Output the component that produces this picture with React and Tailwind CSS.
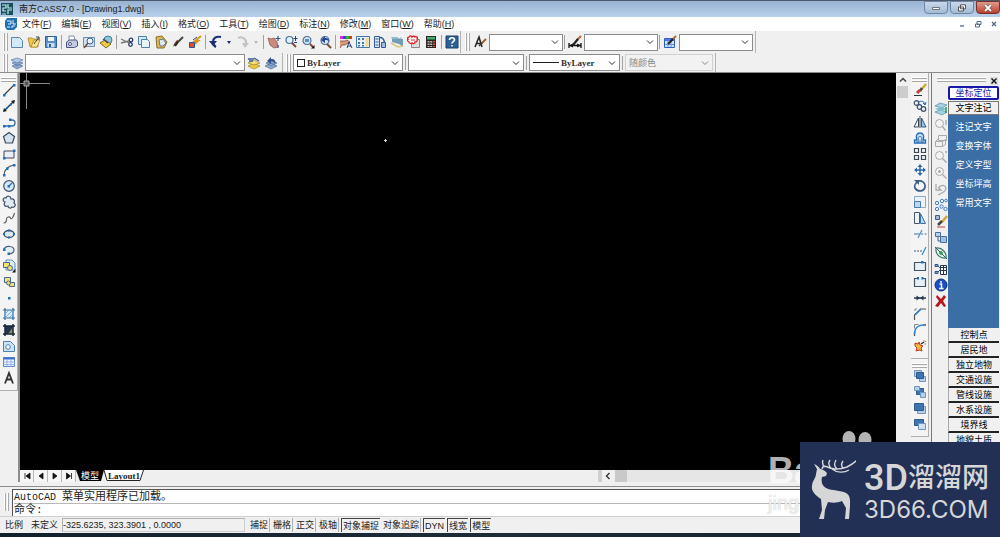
import React, { useState } from 'react';

const ICONS = {
    // standard
    new: <path d="M1.5 2.5h8l3 3v7h-11z" fill="#d3e9f7" stroke="#5b87a8" />,
    open: (
        <>
            <path d="M1 3h4l1 1h5v8H3z" fill="#f0c64a" stroke="#a8842a" strokeWidth=".8" />
            <path d="M4 12l3-7h6l-3 7z" fill="#ffe38a" stroke="#a8842a" strokeWidth=".8" />
            <path d="M7 9l5-7M9 2h3v3" fill="none" stroke="#444" />
        </>
    ),
    save: (
        <>
            <path d="M1.5 1.5h11v11h-11z" fill="#5b8fc9" stroke="#2f5f98" />
            <path d="M4 2h6v4H4z" fill="#eef5fb" />
            <path d="M3.500 8h7v4.500h-7z" fill="#c6dcf0" />
            <path d="M5 9h2v3H5z" fill="#2f5f98" />
        </>
    ),
    print: (
        <>
            <path d="M4 1h5l1 5H4z" fill="#fff" stroke="#6b7896" strokeWidth=".8" />
            <path d="M1.500 7l3-2h7l1 2v4l-3 1.500h-8z" fill="#c4cbe0" stroke="#4b5980" />
            <circle cx="5" cy="9" r="1.500" fill="#fff" stroke="#4b5980" />
        </>
    ),
    preview: (
        <>
            <path d="M1.500 2.500h11v9h-11z" fill="#cfe2f3" stroke="#6a8fb5" />
            <circle cx="8" cy="6" r="3" fill="#eef7ff" stroke="#3f5f85" />
            <path d="M6 8l-4 5" stroke="#7a4a35" strokeWidth="1.600" />
        </>
    ),
    publish: (
        <>
            <circle cx="9" cy="5" r="4" fill="#8fc4dd" stroke="#3c7d9d" />
            <path d="M1 8l5-3 6 4-5 4z" fill="#f2c943" stroke="#7f6724" />
            <path d="M4 4l5 4" stroke="#3a4a70" strokeWidth="1.500" />
        </>
    ),
    cut: (
        <>
            <path d="M1 4l8 4M1 8l8-2" stroke="#777" strokeWidth="1.300" />
            <circle cx="11" cy="5" r="1.800" fill="none" stroke="#2b3c66" strokeWidth="1.300" />
            <circle cx="10.500" cy="9.500" r="1.800" fill="none" stroke="#2b3c66" strokeWidth="1.300" />
        </>
    ),
    copy: (
        <>
            <path d="M1.500 1.500h8v8h-8z" fill="#d4e8f6" stroke="#4d80a8" />
            <path d="M4.500 4.500h6l2 2v6h-8z" fill="#e6f3fb" stroke="#4d80a8" />
        </>
    ),
    paste: (
        <>
            <path d="M2 2l6-1 5 6-3 6H3z" fill="#e1b952" stroke="#8a6c23" />
            <path d="M5 5l4-1 3 4-3 3H6z" fill="#dceaf5" stroke="#5a7a99" />
        </>
    ),
    match: (
        <>
            <path d="M12 2L7 7" stroke="#444" strokeWidth="2" />
            <path d="M8 6L2 12l1-3 3-4z" fill="#6b3d1c" />
            <path d="M7 7l-3 4" stroke="#222" strokeWidth="2" />
        </>
    ),
    block: (
        <>
            <path d="M13 1L7 6h3L5 10" fill="none" stroke="#d39a1c" strokeWidth="2" />
            <path d="M1.500 7.500h5v5h-5z" fill="#d65132" stroke="#31508e" />
            <path d="M9 2l-4 3" stroke="#31508e" />
        </>
    ),
    undo: (
        <>
            <path d="M12 2C7 1 4 3 4 7c0 2 1 4 3 5" fill="none" stroke="#1b2f78" strokeWidth="2.200" />
            <path d="M0 6h8l-4 5z" fill="#1b2f78" />
        </>
    ),
    redo: (
        <>
            <path d="M2 3c4-2 9 1 8 6" fill="none" stroke="#c3c3c3" strokeWidth="2" />
            <path d="M6 8h7l-4 5z" fill="#c3c3c3" />
        </>
    ),
    pan: (
        <>
            <path d="M1 3l3 1 3-1 3 4 1 5-4 1-4-3z" fill="#c98a80" stroke="#8f5a55" strokeWidth=".8" />
            <path d="M11 1v5M8.500 3.500h5M11 10v3" stroke="#36578c" strokeWidth="1.200" />
        </>
    ),
    zoomRt: (
        <>
            <circle cx="5.500" cy="5" r="3.500" fill="#dff0fa" stroke="#4d6c96" strokeWidth="1.200" />
            <path d="M8 8l4 4" stroke="#7c4a35" strokeWidth="2" />
            <path d="M11.500 1v5M9.500 3.500h4M10 7.500h3" stroke="#27457d" />
        </>
    ),
    zoomWin: (
        <>
            <circle cx="6" cy="5.500" r="4" fill="#cfe6f5" stroke="#4d6c96" strokeWidth="1.200" />
            <path d="M4 4h4v3H4z" fill="#5a90c0" />
            <path d="M9 9l3 3" stroke="#7c4a35" strokeWidth="2" />
            <path d="M13.500 10v3.500H10z" fill="#111" />
        </>
    ),
    zoomPrev: (
        <>
            <circle cx="7" cy="5.500" r="4" fill="#cfe6f5" stroke="#4d6c96" strokeWidth="1.200" />
            <path d="M3 5l4-4v2c3 0 4 1 4 4-1-2-2-2-4-2v3z" fill="#25458c" />
            <path d="M9 9l4 4" stroke="#7c4a35" strokeWidth="2" />
        </>
    ),
    props: (
        <>
            <path d="M1 1h3v3H1z" fill="#e52fd0" />
            <path d="M4 1h3v3H4z" fill="#2d47e0" />
            <path d="M7 1h3v3H7z" fill="#25b83a" />
            <path d="M10 1h3v3h-3z" fill="#e53022" />
            <path d="M1 6h5l2-1 3 2-2 1-3 2H3l-2 3" fill="#d99a7a" stroke="#7c4b3c" strokeWidth=".8" />
            <path d="M8 13l2-6 3 6M9 11h3" fill="none" stroke="#2a3f78" />
        </>
    ),
    center: (
        <>
            <path d="M.500 1.500h13v11H.500z" fill="#e4eff9" stroke="#4576ad" />
            <path d="M2 3h2v2H2zM6 3h2v2H6zM2 7h2v2H2zM6 7h2v2H6zM2 10h2v1.500H2zM6 10h2v1.500H6z" fill="#4576ad" />
            <path d="M9.500 3h3v8.500h-3z" fill="#f0dc88" />
        </>
    ),
    palettes: (
        <>
            <path d="M1.500 1.500h5v11h-5z" fill="#dcebf8" stroke="#2f5b9a" />
            <path d="M2.500 4h3M2.500 7h3M2.500 10h3" stroke="#2f5b9a" />
            <path d="M7 2.500c3 0 4 2 4.500 5" fill="none" stroke="#2f5b9a" strokeWidth="1.500" />
            <path d="M8.500 7.500h4v5h-4z" fill="#9dbfe2" stroke="#2f5b9a" />
        </>
    ),
    sheets: (
        <>
            <path d="M1 2h11l-2 4H3z" fill="#93b9cc" />
            <path d="M2 4h11v8L9 9 2 7z" fill="#6e9db5" />
            <path d="M1 8l7 4 5-1" fill="none" stroke="#d8c57c" strokeWidth="1.500" />
            <path d="M8 3l5-2" stroke="#fff" />
        </>
    ),
    markup: (
        <>
            <path d="M4.500 4.500h8v8h-8z" fill="#ddd" stroke="#888" />
            <path d="M2 2c1-2 3-1 3 0 1-1 3-1 3 0 2-1 3 1 2 2 1 2-1 3-2 3 0 2-2 2-3 1-1 1-3 0-3-1-2-1-2-3-1-3-1-1 0-2 1-2z" fill="#fff" stroke="#dd2222" strokeWidth="1.300" />
            <path d="M4 5h4" stroke="#dd2222" />
        </>
    ),
    calc: (
        <>
            <path d="M2 1h10v12H2z" fill="#2c2522" />
            <path d="M3 2h8v2.500H3z" fill="#3fae75" />
            <path d="M3.500 6h2v1.500h-2zM6.200 6h2v1.500h-2zM3.500 8.500h2V10h-2zM6.200 8.500h2V10h-2zM3.500 11h2v1h-2zM6.200 11h2v1h-2z" fill="#bbb" />
            <path d="M9 6h2v1.500H9zM9 8.500h2V10H9zM9 11h2v1H9z" fill="#d24a3a" />
        </>
    ),
    help: (
        <>
            <path d="M1 1h12v12H1z" fill="#2c6095" stroke="#17406e" />
            <path d="M4.500 5c0-3 5-3 5 0 0 1.500-2.500 1.500-2.500 3.500M7 10v1.500" fill="none" stroke="#fff" strokeWidth="1.600" />
        </>
    ),
    textStyle: (
        <>
            <path d="M2 12L6 2l3 10M3.500 8.500h4" fill="none" stroke="#222" strokeWidth="1.500" />
            <path d="M13 4l-5 5" stroke="#a0602c" strokeWidth="2" />
            <path d="M9 8l-3 3" stroke="#333" strokeWidth="1.600" />
        </>
    ),
    dimStyle: (
        <>
            <path d="M1 8v5M13 8v5M1 10.500h12" stroke="#111" strokeWidth="1.300" />
            <path d="M1 10.500l4-2v4zM13 10.500l-4-2v4z" fill="#111" />
            <path d="M13 1L9 5" stroke="#b4682e" strokeWidth="2" />
            <path d="M10 4L5 10" stroke="#222" strokeWidth="2.200" />
        </>
    ),
    tableStyle: (
        <>
            <path d="M1.500 3.500h10v9h-10z" fill="#cfe0f8" stroke="#2f5fc0" />
            <path d="M2 4h9v2H2z" fill="#4c7fe0" />
            <path d="M2 9.500h9M5 6v6M8 6v6" stroke="#6b93dd" />
            <path d="M13 1L9 5" stroke="#b4682e" strokeWidth="2" />
            <path d="M10 4L5 9" stroke="#222" strokeWidth="2" />
        </>
    ),
    layers: (
        <>
            <path d="M2 10l6-2 5 2-6 3zM2 7l6-2 5 2-6 3z" fill="#8fa9cc" stroke="#5d7ba8" strokeWidth=".7" />
            <path d="M1 4l6-2 6 2-6 3z" fill="#b3cbe4" stroke="#5d7ba8" strokeWidth=".7" />
        </>
    ),
    layerCurrent: (
        <>
            <path d="M1 10l6-3 6 3-6 3z" fill="#ecca3c" stroke="#9b8222" strokeWidth=".7" />
            <path d="M1 7l6-3 6 3-6 2z" fill="#f4e07a" stroke="#9b8222" strokeWidth=".7" />
            <path d="M1 3h6M2 5h4M7 2l5 3" stroke="#3c5c94" strokeWidth="1.300" />
        </>
    ),
    layerPrev: (
        <>
            <path d="M1 10l6-3 6 3-6 3zM2 7l5-2 6 2-6 3z" fill="#8fa9cc" stroke="#4f6d9a" strokeWidth=".7" />
            <path d="M3 5l4-4v2c4 0 5 2 4 5-1-2-2-3-4-3v3z" fill="#35528e" />
        </>
    ),
    // draw
    line: (
        <>
            <path d="M2 12L12 2" stroke="#444" strokeWidth="1.200" />
            <path d="M1 11h2.500v2.500H1zM11 1h2.500v2.500H11z" fill="#1d6fc4" />
        </>
    ),
    xline: (
        <>
            <path d="M2 12L12 2" stroke="#333" strokeWidth="1.500" />
            <path d="M1 13l1-4 3 3zM13 1l-4 1 3 3z" fill="#222" />
            <path d="M4 8h2v2H4zM8 4.500h2v2H8z" fill="#1d6fc4" />
        </>
    ),
    pline: (
        <>
            <path d="M2 11h8c4 0 4-6 0-6H8" fill="none" stroke="#3c6fa4" strokeWidth="1.300" />
            <path d="M1 10h2.500v2.500H1zM6 10h2.500v2.500H6zM7 3.500h2.500V6H7z" fill="#1d6fc4" />
        </>
    ),
    polygon: <path d="M7 1.500l5.500 4-2 6.500h-7l-2-6.500z" fill="#d3e2ee" stroke="#3a4a5c" strokeWidth="1.200" />,
    rect: (
        <>
            <path d="M2 4h10v7H2z" fill="#e7f0f8" stroke="#445" />
            <path d="M1 10h2.500v2.500H1zM11 2.500h2.500V5H11z" fill="#1d6fc4" />
        </>
    ),
    arc: (
        <>
            <path d="M2 12c0-5 4-9 10-10" fill="none" stroke="#555" strokeWidth="1.200" />
            <path d="M1 11h2.500v2.500H1zM4 4.500h2.500V7H4zM11 1h2.500v2.500H11z" fill="#1d6fc4" />
        </>
    ),
    circle: (
        <>
            <circle cx="7" cy="7" r="5.300" fill="#dbe9f5" stroke="#3a5573" strokeWidth="1.200" />
            <path d="M7 7l3-3" stroke="#1d6fc4" strokeWidth="1.200" />
            <path d="M5.500 6H8v2.500H5.500z" fill="#1d6fc4" />
        </>
    ),
    cloud: <path d="M3 7C0 6 1 2 4 3c1-3 5-2 5 1 3-1 4 2 3 4 3 2 0 5-2 4-1 2-4 1-4-1-3 1-5-1-3-4z" fill="#dfeaf3" stroke="#3f5268" strokeWidth="1.200" />,
    spline: <path d="M1.500 12c3 0 3-2 3-4s3-3 4-1 3-1 4-5" fill="none" stroke="#666" strokeWidth="1.200" />,
    ellipse: (
        <>
            <ellipse cx="7" cy="7" rx="5" ry="3.500" fill="#dce9f4" stroke="#3a4a5c" strokeWidth="1.300" />
            <path d="M1 6h2v2H1zM6 2.500h2v2H6zM11 6h2v2h-2zM6 9.500h2v2H6z" fill="#1d6fc4" />
        </>
    ),
    ellipseArc: (
        <>
            <path d="M2 6c2-4 10-3 10 1 0 2-2 4-5 4" fill="#e4eef6" stroke="#4a5e78" strokeWidth="1.200" />
            <path d="M1 5.500h2.500V8H1zM5.500 9.500H8V12H5.500z" fill="#1d6fc4" />
        </>
    ),
    insert: (
        <>
            <path d="M4 1h6l3 3v7H4z" fill="#dcecf8" stroke="#5a8fbe" />
            <path d="M1.500 3.500h6v5h-6z" fill="#f3e36a" stroke="#44699a" />
            <circle cx="8" cy="9" r="2.500" fill="#f3e36a" stroke="#44699a" />
            <path d="M13.500 10v3.500H10z" fill="#111" />
        </>
    ),
    makeBlock: (
        <>
            <path d="M2.500 2.500h6v5h-6z" fill="#f3e36a" stroke="#44699a" />
            <path d="M7.500 7.500h5v4h-5z" fill="#f3e36a" stroke="#44699a" />
            <circle cx="6.500" cy="8" r="2" fill="#f3e36a" stroke="#44699a" />
        </>
    ),
    point: <path d="M6 6h2.500v2.500H6z" fill="#1d6fc4" />,
    hatch: (
        <>
            <path d="M3 3h8v8H3z" fill="#d9ebf8" />
            <path d="M1 3h12M1 11h12M3 1v12M11 1v12" stroke="#2d6ca6" strokeWidth="1.200" />
            <path d="M3 7l4-4M3 11l8-8M7 11l4-4" stroke="#6fa5d0" strokeWidth=".8" />
        </>
    ),
    gradient: (
        <>
            <path d="M3 3h8v8H3z" fill="#26334f" />
            <path d="M6 11l5-7v7z" fill="#8c9455" />
            <path d="M1 3h12M1 11h12M3 1v12M11 1v12" stroke="#16283c" strokeWidth="1.500" />
        </>
    ),
    region: (
        <>
            <path d="M1.500 2.500h7l4 4v6h-11z" fill="#cfe3f4" stroke="#4a80b4" />
            <circle cx="6" cy="8" r="2.300" fill="#fff" stroke="#4a80b4" />
        </>
    ),
    table: (
        <>
            <path d="M1.500 2.500h11v9h-11z" fill="#eef4fd" stroke="#5b83cf" />
            <path d="M1.500 2.500h11v2h-11z" fill="#3d6fd0" />
            <path d="M1 7h12M1 9.500h12M5 4v8M9 4v8" stroke="#86a8e0" strokeWidth=".8" />
        </>
    ),
    mtext: <path d="M3 12.500L7 2l4 10.500M4 8.500h6" fill="none" stroke="#333" strokeWidth="1.800" />,
    // modify
    erase: (
        <>
            <path d="M13 1L8 7" stroke="#d9a33a" strokeWidth="2.500" />
            <path d="M9 5L7 8" stroke="#4a4a4a" strokeWidth="2.500" />
            <path d="M7 7l-3 3" stroke="#c5443a" strokeWidth="3" />
            <path d="M1 12.500h8" stroke="#333" />
        </>
    ),
    copyObj: (
        <>
            <circle cx="3.500" cy="4" r="2.300" fill="#e3edf6" stroke="#38506c" strokeWidth="1.200" />
            <path d="M6 3c3-2 6 0 6 3M10 4l2 2 1-3" fill="none" stroke="#1d6fc4" />
            <circle cx="6.500" cy="8" r="2.300" fill="#e3edf6" stroke="#38506c" strokeWidth="1.200" />
            <circle cx="10.500" cy="10" r="2.300" fill="#e3edf6" stroke="#38506c" strokeWidth="1.200" />
        </>
    ),
    mirror: (
        <>
            <path d="M5.500 3v9H1z" fill="#eef4f9" stroke="#3a4a5c" />
            <path d="M8.500 3v9H13z" fill="#9cc4e4" stroke="#2c5c8c" />
            <path d="M7 1v12" stroke="#3a4a5c" />
        </>
    ),
    offset: (
        <>
            <path d="M1.500 12V9H4C2 5 4 2 7 2s5 3 3 7h2.500v3z" fill="#c8e0f4" stroke="#1f6fb8" strokeWidth="1.300" />
            <path d="M3 11h3c0-2-1-3-1-4 0-2 4-2 4 0 0 1-1 2-1 4h3" fill="none" stroke="#3f6f9e" />
        </>
    ),
    array: <path d="M1.500 1.500h4v4h-4zM8.500 1.500h4v4h-4zM1.500 8.500h4v4h-4zM8.500 8.500h4v4h-4z" fill="#eef1f4" stroke="#3c4754" strokeWidth="1.200" />,
    move: (
        <>
            <path d="M7 2v10M2 7h10" stroke="#2f68a8" strokeWidth="1.500" />
            <path d="M7 1l2.500 3h-5zM7 13l2.500-3h-5zM1 7l3-2.500v5zM13 7l-3-2.500v5z" fill="#2f68a8" />
        </>
    ),
    rotate: (
        <>
            <path d="M4 3c4-3 9 1 8 5-1 5-8 5-10 1-1-2 0-4 2-6" fill="none" stroke="#3c5f8a" strokeWidth="1.700" />
            <path d="M1 1h5v5z" fill="#3c5f8a" />
        </>
    ),
    scale: (
        <>
            <path d="M1.500 1.500h11v11h-11z" fill="#eaf3fa" stroke="#8aa9c6" />
            <path d="M1.500 6.500h6v6h-6z" fill="#bcd8ee" stroke="#4b7cac" />
        </>
    ),
    stretch: (
        <>
            <path d="M1.500 1.500h5v11h-5z" fill="#eef3f8" stroke="#47586c" />
            <path d="M7.500 2.500l5 10h-5z" fill="#b9d6ee" stroke="#3f74aa" />
        </>
    ),
    trim: (
        <>
            <path d="M1 7h6M8 7h2M11.500 7h2" stroke="#3f74aa" strokeWidth="1.200" />
            <path d="M5 11l4-8" stroke="#5294d0" strokeWidth="1.200" />
        </>
    ),
    extend: (
        <>
            <path d="M1 8h2M4 8h2M7 8h2" stroke="#4b5f78" strokeWidth="1.200" />
            <path d="M9 12l4-8" stroke="#3f8ad0" strokeWidth="1.300" />
        </>
    ),
    breakPt: (
        <>
            <path d="M1.500 3.500h11v8h-11z" fill="#e5eff8" stroke="#445468" strokeWidth="1.200" />
            <path d="M8 2h2.500v2.500H8z" fill="#1d6fc4" />
        </>
    ),
    breakObj: (
        <>
            <path d="M5 3.500H1.500v8h11v-8H9" fill="#e5eff8" stroke="#445468" strokeWidth="1.200" />
            <path d="M4 2h2v2.500H4zM8.500 2h2v2.500h-2z" fill="#1d6fc4" />
        </>
    ),
    join: (
        <>
            <path d="M1 7h12" stroke="#24364c" strokeWidth="1.500" />
            <path d="M7 7L3.500 4.500v5zM7 7l3.500-2.500v5z" fill="#24364c" />
        </>
    ),
    chamfer: (
        <>
            <path d="M1.500 13V8l6-6H13" fill="none" stroke="#555" strokeWidth="1.200" />
            <path d="M2 8l6-6" stroke="#2f86d4" strokeWidth="1.600" />
            <path d="M2 2h2M2 2v2" stroke="#888" />
        </>
    ),
    fillet: (
        <>
            <path d="M1.500 13v-3M10 2h3" stroke="#555" strokeWidth="1.300" />
            <path d="M1.500 11c0-6 4-9 9-9" fill="none" stroke="#2f86d4" strokeWidth="1.600" />
            <path d="M1.500 1.500h4M1.500 1.500v4" stroke="#888" />
        </>
    ),
    explode: (
        <>
            <path d="M2 4l3 1 1-2 1 3 3 1-2 2 1 3-3-1-3 1 1-3-2-2z" fill="#f0b93c" stroke="#c23a22" />
            <path d="M8 5l3-2" stroke="#333" strokeWidth="1.500" />
            <path d="M11 1v1.500M13 2l-1 1M13 5h-1.500" stroke="#c97b3c" />
        </>
    ),
    front: (
        <>
            <path d="M1.500 1.500h7v6h-7z" fill="#b5d0e8" stroke="#6f97bd" />
            <path d="M6.500 7.500h6v5h-6z" fill="#b5d0e8" stroke="#6f97bd" />
            <path d="M3.500 3.500h7v6h-7z" fill="#3f75ae" stroke="#2c5c90" />
        </>
    ),
    back: (
        <>
            <path d="M3.500 3.500h7v6h-7z" fill="#3f75ae" stroke="#2c5c90" />
            <path d="M1.500 1.500h5v4h-5z" fill="#b5d0e8" stroke="#6f97bd" />
            <path d="M7.500 7.500h5v5h-5z" fill="#b5d0e8" stroke="#6f97bd" />
        </>
    ),
    above: (
        <>
            <path d="M4.500 5.500h8v7h-8z" fill="#b5d0e8" stroke="#6f97bd" />
            <path d="M1.500 2.500h9v7h-9z" fill="#3f75ae" stroke="#2c5c90" />
        </>
    ),
    under: (
        <>
            <path d="M1.500 2.500h9v6h-9z" fill="#3f75ae" stroke="#2c5c90" />
            <path d="M5.500 6.500h7v6h-7z" fill="#cfe2f2" stroke="#6f97bd" />
        </>
    ),
    // CASS side tools
    layerGreen: (
        <>
            <path d="M1 10l5-2 7 2-5 3zM1 4l5-3 7 2-5 3z" fill="#a9d2e0" stroke="#5f98ad" strokeWidth=".8" />
            <path d="M1 7l6-2 6 2-6 2z" fill="#7cbccc" />
            <path d="M12 5v6" stroke="#2f9a52" strokeWidth="1.500" />
        </>
    ),
    grayZoomIn: (
        <>
            <circle cx="5.500" cy="5.500" r="4" fill="#f3f3f3" stroke="#aaa" />
            <path d="M8.500 8.500l3 4M12 2v5" stroke="#aaa" strokeWidth="1.300" />
        </>
    ),
    grayBox: <path d="M4.500 1.500h8v5h-8zM1.500 7.500h7v5h-7zM1.500 7.500l3-3M8.500 7.500l3-2v5l-3 2" fill="none" stroke="#aaa" />,
    grayZoomWin: (
        <>
            <circle cx="5.500" cy="5.500" r="4" fill="#f3f3f3" stroke="#aaa" />
            <path d="M8.500 8.500l4 4M11 2h2" stroke="#aaa" strokeWidth="1.500" />
        </>
    ),
    grayZoom: (
        <>
            <circle cx="5.500" cy="5.500" r="4" fill="#f3f3f3" stroke="#aaa" />
            <path d="M8.500 8.500l4 4M4 5.500h3M5.500 4v3" stroke="#aaa" strokeWidth="1.300" />
        </>
    ),
    grayUndo: <path d="M2 2v6h5L4.500 5.500C8 2 11 3 12 6c0 3-3 5-8 7" fill="none" stroke="#aaa" strokeWidth="1.300" />,
    dots: (
        <g fill="#e3effa" stroke="#4b82be">
            <circle cx="3" cy="5" r="1.700" />
            <circle cx="8" cy="3" r="1.700" />
            <circle cx="12" cy="2.500" r="1.300" />
            <circle cx="3" cy="11" r="1.700" />
            <circle cx="7.500" cy="8.500" r="1.700" />
            <circle cx="11.500" cy="11" r="1.700" />
        </g>
    ),
    eraseBlock: (
        <>
            <path d="M1.500 1.500h4v4h-4z" fill="#9db7d4" stroke="#3f5f8a" />
            <path d="M13 2L8 8" stroke="#d9a33a" strokeWidth="2.500" />
            <path d="M8 7l-4 4" stroke="#444" strokeWidth="2.500" />
            <path d="M3 13h8" stroke="#c5443a" />
        </>
    ),
    link: (
        <>
            <path d="M1.500 2.500h5v4h-5z" fill="#b8d0ea" stroke="#4a6f9e" />
            <path d="M4 7v4h4" fill="none" stroke="#2f5f98" />
            <path d="M6.500 6.500h6v6h-6z" fill="#a4c0e4" stroke="#4a6f9e" />
        </>
    ),
    curve: (
        <>
            <path d="M2 2c6-1 11 5 10 10C6 13 1 8 2 2z" fill="#dff0e7" stroke="#3c7a74" strokeWidth="1.200" />
            <path d="M1 1l12 12" stroke="#3a5f5f" />
            <path d="M5 7h4M7 5v4" stroke="#2f9a52" strokeWidth="1.500" />
        </>
    ),
    tree: (
        <>
            <path d="M1 2.500h3v2H1zM1 9.500h3v2H1z" fill="#7fa3cf" stroke="#2f5590" />
            <path d="M4 4l3 3-3 3" fill="none" stroke="#2f5590" />
            <path d="M6.500 3.500h6v9h-6z" fill="#fff" stroke="#26364c" />
            <path d="M7 5.500h6M9.500 4v8M7 8.500h6" stroke="#26364c" />
        </>
    ),
    info: (
        <>
            <circle cx="7" cy="7" r="6" fill="#1b50c4" stroke="#0d2f80" />
            <path d="M7 3v1.800M5.500 6h2v4.500M5 10.500h4.500" fill="none" stroke="#fff" strokeWidth="1.500" />
        </>
    ),
    cross: <path d="M3 1l4 4 3-4 2 2-3 4 3 5-2 1-3-4-3 4-3-1 4-5-3-4z" fill="#b3161b" />,
};

const standardTools = [
    ['new', 'open', 'save'],
    ['print', 'preview', 'publish'],
    ['cut', 'copy', 'paste', 'match', 'block'],
    ['undo', '▾', 'redo', '▿'],
    ['pan', 'zoomRt', 'zoomWin', 'zoomPrev'],
    ['props', 'center', 'palettes', 'sheets', 'markup', 'calc'],
    ['help'],
];

const drawTools = ['line', 'xline', 'pline', 'polygon', 'rect', 'arc', 'circle', 'cloud', 'spline', 'ellipse', 'ellipseArc', 'insert', 'makeBlock', 'point', 'hatch', 'gradient', 'region', 'table', 'mtext'];
const modifyTools = ['erase', 'copyObj', 'mirror', 'offset', 'array', 'move', 'rotate', 'scale', 'stretch', 'trim', 'extend', 'breakPt', 'breakObj', 'join', 'chamfer', 'fillet', 'explode'];
const orderTools = ['front', 'back', 'above', 'under'];
const cassTools = ['layerGreen', 'grayZoomIn', 'grayBox', 'grayZoomWin', 'grayZoom', 'grayUndo', 'dots', 'eraseBlock', 'link', 'curve', 'tree', 'info', 'cross'];

const menus = [
    ['文件', 'F'], ['编辑', 'E'], ['视图', 'V'], ['插入', 'I'], ['格式', 'O'], ['工具', 'T'],
    ['绘图', 'D'], ['标注', 'N'], ['修改', 'M'], ['窗口', 'W'], ['帮助', 'H'],
];

const textItems = ['注记文字', '变换字体', '定义字型', '坐标坪高', '常用文字'];
const categories = ['控制点', '居民地', '独立地物', '交通设施', '管线设施', '水系设施', '境界线', '地貌土质'];

const initialModes = [
    { label: '捕捉', on: false },
    { label: '栅格', on: false },
    { label: '正交', on: false },
    { label: '极轴', on: false },
    { label: '对象捕捉', on: true },
    { label: '对象追踪', on: false },
    { label: 'DYN', on: true },
    { label: '线宽', on: true },
    { label: '模型', on: true },
];

function Icon({ name }) {
    return (
        <svg viewBox="0 0 14 14" className="size-3.5 shrink-0" fill="none" aria-hidden="true">
            {ICONS[name]}
        </svg>
    );
}

function Tool({ name }) {
    return (
        <button aria-label={name} className="flex h-4 w-[17px] shrink-0 items-center justify-center hover:bg-sky-100">
            <Icon name={name} />
        </button>
    );
}

function Grip() {
    return (
        <div className="flex h-[18px] shrink-0 gap-px">
            <div className="w-0.5 border-r border-[#a8a8a8] bg-white"></div>
            <div className="w-0.5 border-r border-[#a8a8a8] bg-white"></div>
        </div>
    );
}

function GripH() {
    return (
        <div className="flex w-full flex-col gap-px">
            <div className="h-0.5 border-b border-[#a8a8a8] bg-white"></div>
            <div className="h-0.5 border-b border-[#a8a8a8] bg-white"></div>
        </div>
    );
}

function Separator() {
    return <div className="h-3.5 w-px shrink-0 bg-[#a0a0a0]"></div>;
}

function Chevron({ up }) {
    return (
        <svg viewBox="0 0 8 8" className="size-2 shrink-0" fill="none" stroke="currentColor" aria-hidden="true">
            {up ? <path d="M1 5.500l3-3 3 3" strokeWidth="1.500" /> : <path d="M1 2.500l3 3 3-3" />}
        </svg>
    );
}

function Combo({ label, value = '', className, children, disabled }) {
    return (
        <div className={`flex h-[17px] shrink-0 items-center gap-0.5 border px-[3px] ${disabled ? 'border-[#d0d0d0] bg-[#f2f2f2] text-[#888]' : 'border-[#8c8c8c] bg-white text-[#333]'} ${className}`}>
            {children}
            <select
                aria-label={label}
                disabled={disabled}
                className="h-full min-w-0 flex-1 appearance-none bg-transparent font-['Liberation_Serif','Noto_Sans_CJK_SC',serif] text-[9px] leading-3 font-bold disabled:font-normal disabled:opacity-100"
            >
                <option>{value}</option>
            </select>
            <Chevron />
        </div>
    );
}

function TitleBar() {
    return (
        <header className="flex h-[17px] shrink-0 items-start justify-between border-t border-[#4d5a6b] bg-gradient-to-b from-[#98b3d3] to-[#b8d0ea]">
            <div className="flex h-4 items-center gap-1.5 pl-px">
                <svg viewBox="0 0 12 12" className="size-3" aria-hidden="true">
                    <path d="M0 0h12v12H0z" fill="#16505c" />
                    <path d="M1 2h4v3H2v3h3M7 1v4h4M7 11V7h4M1 11h4" fill="none" stroke="#c9eef0" strokeWidth="1.200" />
                </svg>
                <h1 className="text-[9px] leading-4 text-[#1c1c1c]">南方CASS7.0 - [Drawing1.dwg]</h1>
            </div>
            <div className="flex gap-0.5">
                <button aria-label="最小化" className="flex h-[13px] w-6 items-center justify-center rounded-b-sm border border-[#6f86a3] bg-gradient-to-b from-[#c9d9ea] to-[#a3bad5]">
                    <svg viewBox="0 0 10 8" className="h-2 w-2.5"><path d="M1.500 3.500h7v2h-7z" fill="#fff" stroke="#555" strokeWidth=".8" /></svg>
                </button>
                <button aria-label="还原" className="flex h-[13px] w-6 items-center justify-center rounded-b-sm border border-[#6f86a3] bg-gradient-to-b from-[#c9d9ea] to-[#a3bad5]">
                    <svg viewBox="0 0 10 8" className="h-2 w-2.5"><path d="M3.500 .800h5v4h-5zM1.500 3h5v4h-5z" fill="#fff" stroke="#555" /></svg>
                </button>
                <button aria-label="关闭" className="flex h-[13px] w-6 items-center justify-center rounded-b-sm border border-[#7b2f28] bg-gradient-to-b from-[#dd9a8c] to-[#bb3c2b]">
                    <svg viewBox="0 0 10 8" className="h-2 w-2.5"><path d="M2 1l6 6M8 1L2 7" stroke="#444" strokeWidth="2.800" /><path d="M2 1l6 6M8 1L2 7" stroke="#fff" strokeWidth="1.800" /></svg>
                </button>
            </div>
        </header>
    );
}

function MenuBar() {
    return (
        <nav className="flex h-[14px] shrink-0 items-center bg-white">
            <svg viewBox="0 0 12 12" className="mr-[5px] ml-[5px] size-3 shrink-0" aria-hidden="true">
                <path d="M2 0h10v9l-3 3H2L0 9V3z" fill="#1d70b0" />
                <path d="M2 3h4v3H3M8 2v4h3M7 10V8h3M2 9h3" fill="none" stroke="#e4f4ff" />
            </svg>
            <div className="flex flex-1 gap-2.5">
                {menus.map(([label, key]) => (
                    <button key={key} className="text-[9px] leading-[14px] whitespace-nowrap text-[#1c1c1c]">
                        {label}(<u>{key}</u>)
                    </button>
                ))}
            </div>
            <div className="flex gap-1 text-[#54688a]">
                <button aria-label="最小化图形" className="flex size-3 items-center justify-center">
                    <svg viewBox="0 0 8 8" className="size-2"><path d="M2 6h4" stroke="currentColor" strokeWidth="1.300" /></svg>
                </button>
                <button aria-label="还原图形" className="flex size-3 items-center justify-center">
                    <svg viewBox="0 0 8 8" className="size-2" fill="none" stroke="currentColor"><path d="M3 1.500h4v3H3zM1.500 4h4v3h-4z" /></svg>
                </button>
                <button aria-label="关闭图形" className="flex size-3 items-center justify-center">
                    <svg viewBox="0 0 8 8" className="size-2"><path d="M2 2l4 4M6 2L2 6" stroke="currentColor" strokeWidth="1.400" /></svg>
                </button>
            </div>
        </nav>
    );
}

function StandardToolbar() {
    return (
        <div className="flex h-[22px] shrink-0 items-center">
            <div className="flex h-full items-center border-r border-[#b4b4b4] pl-[3px]">
                <Grip />
                {standardTools.map((group, i) => (
                    <div key={i} className="flex items-center">
                        {i > 0 && <div className="flex w-1 justify-center"><Separator /></div>}
                        {group.map(name =>
                            name === '▾' || name === '▿' ? (
                                <button key={name} aria-label="列表" className={`flex h-4 w-2.5 items-center justify-center ${name === '▾' ? 'text-[#1b2f78]' : 'text-[#b8b8b8]'}`}>
                                    <svg viewBox="0 0 4 3" className="h-[3px] w-1"><path d="M0 0h4L2 3z" fill="currentColor" /></svg>
                                </button>
                            ) : (
                                <Tool key={name} name={name} />
                            )
                        )}
                    </div>
                ))}
            </div>
            <div className="flex h-full items-center gap-px border-r border-[#b4b4b4] pr-0.5 pl-1">
                <Grip />
                <Tool name="textStyle" />
                <Combo label="文字样式" className="w-[74px]" />
                <Separator />
                <Tool name="dimStyle" />
                <Combo label="标注样式" className="w-[74px]" />
                <Separator />
                <Tool name="tableStyle" />
                <Combo label="表格样式" className="w-[74px]" />
            </div>
        </div>
    );
}

function LayerToolbar() {
    return (
        <div className="flex h-5 shrink-0 items-center border-b border-[#8c8c8c]">
            <div className="flex h-full items-center border-r border-[#b4b4b4] pr-[3px] pl-[3px]">
                <Grip />
                <Tool name="layers" />
                <Combo label="图层" className="w-[220px]" />
                <Tool name="layerCurrent" />
                <Tool name="layerPrev" />
            </div>
            <div className="flex h-full items-center gap-0.5 border-r border-[#b4b4b4] pr-0.5 pl-[3px]">
                <Grip />
                <Combo label="颜色" value="ByLayer" className="w-[110px]">
                    <span className="size-2 shrink-0 border border-[#222]"></span>
                </Combo>
                <Separator />
                <Combo label="线型" className="w-[116px]" />
                <Separator />
                <Combo label="线宽" value="ByLayer" className="w-[91px]">
                    <span className="h-px w-[26px] shrink-0 bg-[#222]"></span>
                </Combo>
                <Separator />
                <Combo label="打印样式" value="随颜色" className="w-[88px]" disabled />
            </div>
        </div>
    );
}

function VerticalToolbar({ tools }) {
    return (
        <div className="flex w-[18px] flex-col items-center border-r border-b border-[#b0b0b0] bg-[#f4f4f4] px-px pt-1 pb-1">
            <GripH />
            <div className="flex flex-col">
                {tools.map(name => <Tool key={name} name={name} />)}
            </div>
        </div>
    );
}

function Canvas() {
    return (
        <div className="min-h-0 flex-1 overflow-hidden bg-black">
            <svg className="size-full" fill="none" aria-label="绘图区">
                <path d="M0 10.500h30M6.500 0v36" stroke="#8a8a8a" />
                <path d="M4 8h5v5H4z" fill="#555" stroke="#aaa" />
                <path d="M364 67.500h3M365.500 66v3" stroke="#ddd" />
            </svg>
        </div>
    );
}

function LayoutTabs() {
    const navs = [
        ['第一个', 'M2 1v6M7 1v6L3 4z'],
        ['上一个', 'M6 1v6L2 4z'],
        ['下一个', 'M2 1v6l4-3z'],
        ['最后一个', 'M6.500 1v6M1.500 1v6l4-3z'],
    ];
    return (
        <div className="flex h-3 shrink-0 items-stretch overflow-hidden bg-[#efefef]">
            {navs.map(([label, d]) => (
                <button key={label} aria-label={label} className="flex w-[14px] items-center justify-center border-r border-[#b8b8b8] bg-[#f5f5f5]">
                    <svg viewBox="0 0 8 8" className="size-2" fill="#111" stroke="#111" strokeWidth=".8"><path d={d} /></svg>
                </button>
            ))}
            <button className="relative w-7 text-[9px] leading-3 text-white">
                <svg viewBox="0 0 28 12" className="absolute inset-0 h-3 w-7"><path d="M0 0h28l-3 11H4z" fill="#000" /></svg>
                <span className="relative">模型</span>
            </button>
            <button className="relative w-10 font-['Liberation_Serif',serif] text-[9px] leading-3 font-bold text-[#222]">
                <svg viewBox="0 0 40 12" className="absolute inset-0 h-3 w-10" fill="#fff" stroke="#222"><path d="M0 0l3 10.500h33L39.500 0" /></svg>
                <span className="relative">Layout1</span>
            </button>
            <div className="flex-1"></div>
            <div className="flex w-[35%] bg-[#e6e6e6]">
                <div className="w-1 bg-[#cfcfcf]"></div>
                <button aria-label="向左滚动" className="flex w-[13px] items-center justify-center bg-[#f0f0f0]">
                    <svg viewBox="0 0 8 8" className="size-2" fill="none" stroke="#333" strokeWidth="1.400"><path d="M5.500 1l-3 3 3 3" /></svg>
                </button>
                <div className="w-3 bg-[#c9c9c9]"></div>
            </div>
        </div>
    );
}

function ScreenMenu() {
    return (
        <aside className="flex w-[69px] shrink-0 flex-col overflow-hidden border-l border-[#777] pt-1 pl-px">
            <div className="flex h-[9px] shrink-0 items-start gap-1 pr-0.5 pl-1">
                <GripH />
                <button aria-label="关闭菜单" className="flex size-2 shrink-0 items-center justify-center bg-[#ddd]">
                    <svg viewBox="0 0 8 8" className="size-2"><path d="M1.500 1.500l5 5M6.500 1.500l-5 5" stroke="#111" strokeWidth="1.400" /></svg>
                </button>
            </div>
            <div className="flex min-h-0 flex-1">
                <div className="flex w-[15px] flex-col items-center pt-[15px]">
                    {cassTools.map(name => <Tool key={name} name={name} />)}
                </div>
                <div className="flex flex-1 flex-col pr-px text-[9px]">
                    <button className="h-[14px] shrink-0 rounded-xs border-2 border-[#1717a8] bg-white leading-[10px] text-[#1717a8]">坐标定位</button>
                    <button className="mt-px h-[14px] shrink-0 border border-[#777] bg-[#f0f0f0] leading-3 text-black">文字注记</button>
                    <div className="flex h-[213px] shrink-0 flex-col items-center bg-[#3b6ea5] pt-[3px] text-white">
                        {textItems.map(item => (
                            <button key={item} className="h-[19px] leading-[19px]">{item}</button>
                        ))}
                    </div>
                    {categories.map(item => (
                        <button key={item} className="h-[15px] shrink-0 border-b-2 border-l border-[#222] border-l-[#aaa] bg-[#f0f0f0] leading-[14px] text-black">{item}</button>
                    ))}
                </div>
            </div>
        </aside>
    );
}

function CommandLine() {
    return (
        <div className="mt-1 flex h-[30px] shrink-0 border-t border-[#8c8c8c] pt-0.5">
            <div className="flex w-3 shrink-0 justify-center pt-1"><Grip /></div>
            <div className="flex-1 border-t border-l border-[#555] bg-white pl-px font-['Liberation_Mono','Noto_Sans_CJK_SC',monospace] text-[10px] text-[#222]">
                <p className="h-[14px] border-b border-[#b8b8b8] leading-[14px]">
                    AutoCAD <span className="text-[11px]">菜单实用程序已加载。</span>
                </p>
                <div className="flex h-3 items-center leading-3">
                    <label htmlFor="command" className="text-[11px]">命令:</label>
                    <input id="command" className="h-3 flex-1 bg-transparent outline-none" />
                </div>
            </div>
        </div>
    );
}

function StatusBar() {
    const [modes, setModes] = useState(initialModes);

    const toggleMode = (label) => {
        setModes(modes.map(m => (m.label === label ? { ...m, on: !m.on } : m)));
    };

    return (
        <footer className="flex h-[17px] shrink-0 items-center border-t border-[#d0d0d0] pl-[5px] text-[9px] leading-3 text-[#222]">
            <span className="w-[26px]">比例</span>
            <span className="w-[31px]">未定义</span>
            <span className="mr-1 h-[14px] w-[183px] border border-[#b0b0b0] border-r-[#ccc] border-b-[#ccc] whitespace-pre">-325.6235, 323.3901 , 0.0000</span>
            <div className="flex gap-0.5">
                {modes.map(m => (
                    <button
                        key={m.label}
                        aria-pressed={m.on}
                        onClick={() => toggleMode(m.label)}
                        className={`h-[14px] px-px leading-3 ${
                            m.on ? 'border-t border-l border-[#444]' : 'border-r border-[#b0b0b0]'
                        }`}
                    >
                        {m.label}
                    </button>
                ))}
            </div>
        </footer>
    );
}

function Watermark() {
    return (
        <div className="pointer-events-none absolute right-0 bottom-0 h-[110px] w-[234px] overflow-hidden">
            <svg viewBox="0 0 40 20" className="absolute top-[3px] left-[72px] h-5 w-10" fill="#b3b3b3" aria-hidden="true">
                <ellipse cx="11" cy="9" rx="6.500" ry="8" />
                <ellipse cx="27" cy="10" rx="6.500" ry="8" />
            </svg>
            <span className="absolute top-[26px] left-0.5 font-['Liberation_Sans',sans-serif] text-[36px] leading-9 font-bold text-white/70">Ba</span>
            <span className="absolute top-16 left-0.5 font-['Liberation_Sans',sans-serif] text-[20px] leading-6 text-white/80 [text-shadow:0_0_1px_#aaa]">jing</span>
            <div className="absolute right-0 bottom-0 flex h-[95px] w-[200px] items-center gap-2 bg-[#223056] pl-2.5 text-[#d6d6d6]">
                <svg viewBox="0 0 46 62" className="h-[62px] w-[46px] shrink-0" fill="currentColor" aria-hidden="true">
                    <path d="M7 10L4 5c3 1 5 3 6 5 2 0 4 1 7 4l-1 3-4 1c-1 5 0 9 4 11 6 3 15 2 20 5 5 3 4 8 4 13l-1 13h-4l1-11-4-7c-5 2-9 2-14 1l-3 8-1 9H9l3-9-1-11C5 36 1 32 2 27c0-5 4-8 4-12z" />
                    <path d="M12 10c1-4 4-3 8-1 6 2 12 1 17-1 4-2 7-4 10-7M15 8c-3-2-3-4-2-7M21 9c-3-3-3-5-1-8M27 10c-3-3-3-5-1-9M33 9c-2-2-2-4 0-7M22 10c5 4 12 4 17 1" fill="none" stroke="currentColor" strokeWidth="1.400" />
                </svg>
                <div className="pt-1 whitespace-nowrap">
                    <p className="flex items-center font-['Roboto','Noto_Sans_CJK_SC',sans-serif] leading-9 font-medium">
                        <span className="text-[36px]">3D</span>
                        <span className="text-[27px]">溜溜网</span>
                    </p>
                    <p className="font-['Inter',sans-serif] text-[24px] leading-7">3D66.COM</p>
                </div>
            </div>
        </div>
    );
}

export default function App() {
    return (
        <div className="relative flex h-screen flex-col overflow-hidden bg-[#f0f0f0] font-['Liberation_Sans','Noto_Sans_CJK_SC',sans-serif]">
            <TitleBar />
            <MenuBar />
            <StandardToolbar />
            <LayerToolbar />
            <main className="flex min-h-0 flex-1">
                <div className="w-5 shrink-0 border-r-2 border-[#8c8c8c]">
                    <VerticalToolbar tools={drawTools} />
                </div>
                <div className="flex min-w-0 flex-1 flex-col">
                    <div className="flex min-h-0 flex-1">
                        <Canvas />
                        <div className="flex w-[13px] shrink-0 flex-col items-center">
                            <button aria-label="向上滚动" className="flex h-[13px] w-full items-center justify-center text-[#444]">
                                <Chevron up />
                            </button>
                            <div className="h-3 w-[11px] bg-[#cdcdcd]"></div>
                        </div>
                    </div>
                    <LayoutTabs />
                </div>
                <div className="flex w-[22px] shrink-0 flex-col items-center">
                    <VerticalToolbar tools={modifyTools} />
                    <VerticalToolbar tools={orderTools} />
                </div>
                <ScreenMenu />
            </main>
            <CommandLine />
            <StatusBar />
            <div className="h-1 shrink-0 bg-gradient-to-r from-[#10202c] via-[#1c2c38] to-[#10202c]"></div>
            <Watermark />
        </div>
    );
}
